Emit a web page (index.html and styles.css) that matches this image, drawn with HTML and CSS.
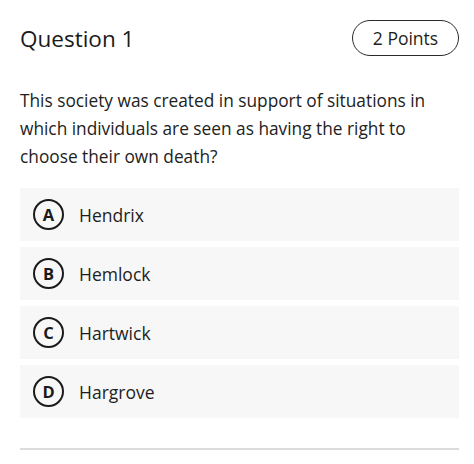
FILE: index.html
```html
<!DOCTYPE html>
<html>
<head>
<meta charset="utf-8">
<link rel="stylesheet" href="styles.css">
</head>
<body>
<div class="card">
  <div class="header">
    <h1 class="title">Question 1</h1>
    <div class="points">2 Points</div>
  </div>
  <p class="question">This society was created in support of situations in which individuals are seen as having the right to choose their own death?</p>
  <div class="options">
    <div class="option"><span class="letter">A</span><span class="label">Hendrix</span></div>
    <div class="option"><span class="letter">B</span><span class="label">Hemlock</span></div>
    <div class="option"><span class="letter">C</span><span class="label">Hartwick</span></div>
    <div class="option"><span class="letter">D</span><span class="label">Hargrove</span></div>
  </div>
  <div class="divider"></div>
</div>
</body>
</html>
```
FILE: styles.css
```css
html, body {
  margin: 0;
  padding: 0;
  background: #ffffff;
}
body {
  font-family: "Open Sans", "Liberation Sans", sans-serif;
  color: #222222;
}
.card {
  padding: 20px 15px 0 20px;
}
.header {
  display: flex;
  justify-content: space-between;
  align-items: center;
  height: 36px;
}
.title {
  margin: 0;
  font-size: 22.5px;
  font-weight: 500;
  color: #1a1a1a;
}
.points {
  box-sizing: border-box;
  height: 36px;
  width: 107px;
  border: 1.5px solid #2a2a2a;
  border-radius: 18px;
  display: flex;
  align-items: center;
  justify-content: center;
  font-size: 17.5px;
  color: #1e1e1e;
}
.question {
  margin: 31px 0 0 0;
  font-size: 17.3px;
  line-height: 28px;
  color: #222;
}
.options {
  margin-top: 17px;
  display: flex;
  flex-direction: column;
  gap: 6px;
}
.option {
  height: 53px;
  background: #f7f7f7;
  display: flex;
  align-items: center;
  padding-left: 13px;
}
.letter {
  box-sizing: border-box;
  flex: none;
  width: 31px;
  height: 31px;
  padding-top: 1px;
  border: 2px solid #1a1a1a;
  border-radius: 50%;
  display: flex;
  align-items: center;
  justify-content: center;
  font-size: 16.5px;
  font-weight: 700;
  line-height: 1;
  color: #1a1a1a;
}
.label {
  margin-left: 15px;
  font-size: 17.5px;
  color: #1e1e1e;
}
.divider {
  margin-top: 30px;
  height: 2px;
  background: #dcdcdc;
}
```
